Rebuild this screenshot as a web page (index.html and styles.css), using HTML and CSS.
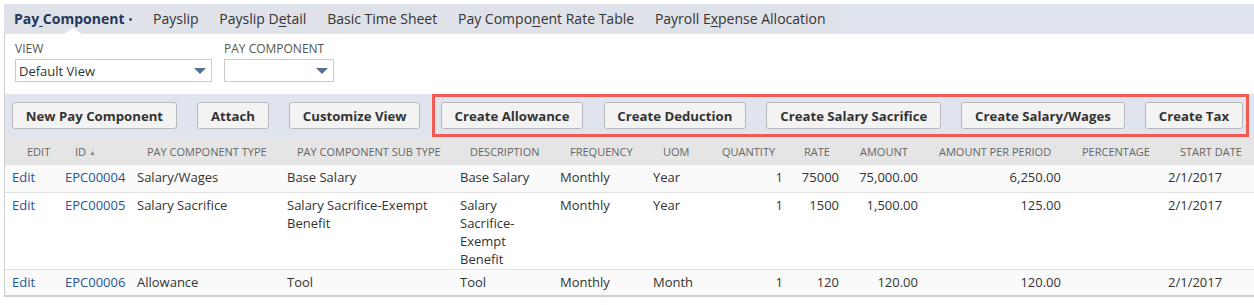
FILE: index.html
```html
<!DOCTYPE html>
<html>
<head>
<meta charset="utf-8">
<link rel="stylesheet" href="styles.css">
</head>
<body>
<div class="page">
  <div class="tabbar">
    <div class="tabgroup">
      <div class="tab active">Pay<u> </u>Component <span class="dot">•</span></div>
      <div class="tab">Payslip</div>
      <div class="tab">Payslip D<u>e</u>tail</div>
      <div class="tab">Basic Time Sheet</div>
      <div class="tab">Pay Compo<u>n</u>ent Rate Table</div>
      <div class="tab">Payroll E<u>x</u>pense Allocation</div>
    </div>
  </div>
  <div class="panel">
    <div class="filters">
      <div class="field">
        <div class="label">VIEW</div>
        <div class="select wide"><span>Default View</span><span class="arrow"></span></div>
      </div>
      <div class="field">
        <div class="label">PAY COMPONENT</div>
        <div class="select narrow"><span></span><span class="arrow"></span></div>
      </div>
    </div>
    <div class="btnbar">
      <button class="btn">New Pay Component</button>
      <button class="btn">Attach</button>
      <button class="btn">Customize View</button>
      <div class="highlight">
        <button class="btn">Create Allowance</button>
        <button class="btn">Create Deduction</button>
        <button class="btn">Create Salary Sacrifice</button>
        <button class="btn">Create Salary/Wages</button>
        <button class="btn">Create Tax</button>
      </div>
    </div>
    <table class="grid">
      <colgroup>
        <col class="c-edit"><col class="c-id"><col class="c-type"><col class="c-sub"><col class="c-desc"><col class="c-freq"><col class="c-uom"><col class="c-qty"><col class="c-rate"><col class="c-amt"><col class="c-app"><col class="c-pct"><col class="c-start">
      </colgroup>
      <thead>
        <tr>
          <th class="first">EDIT</th>
          <th>ID <span class="sort">▲</span></th>
          <th>PAY COMPONENT TYPE</th>
          <th>PAY COMPONENT SUB TYPE</th>
          <th>DESCRIPTION</th>
          <th>FREQUENCY</th>
          <th>UOM</th>
          <th>QUANTITY</th>
          <th>RATE</th>
          <th>AMOUNT</th>
          <th>AMOUNT PER PERIOD</th>
          <th>PERCENTAGE</th>
          <th class="startcol">START DATE</th>
        </tr>
      </thead>
      <tbody>
        <tr class="odd">
          <td class="first"><a>Edit</a></td>
          <td><a>EPC00004</a></td>
          <td>Salary/Wages</td>
          <td>Base Salary</td>
          <td>Base Salary</td>
          <td>Monthly</td>
          <td>Year</td>
          <td class="num">1</td>
          <td class="num">75000</td>
          <td class="num">75,000.00</td>
          <td class="num">6,250.00</td>
          <td></td>
          <td>2/1/2017</td>
        </tr>
        <tr class="even">
          <td class="first"><a>Edit</a></td>
          <td><a>EPC00005</a></td>
          <td>Salary Sacrifice</td>
          <td>Salary Sacrifice-Exempt Benefit</td>
          <td>Salary Sacrifice-Exempt Benefit</td>
          <td>Monthly</td>
          <td>Year</td>
          <td class="num">1</td>
          <td class="num">1500</td>
          <td class="num">1,500.00</td>
          <td class="num">125.00</td>
          <td></td>
          <td>2/1/2017</td>
        </tr>
        <tr class="odd last">
          <td class="first"><a>Edit</a></td>
          <td><a>EPC00006</a></td>
          <td>Allowance</td>
          <td>Tool</td>
          <td>Tool</td>
          <td>Monthly</td>
          <td>Month</td>
          <td class="num">1</td>
          <td class="num">120</td>
          <td class="num">120.00</td>
          <td class="num">120.00</td>
          <td></td>
          <td>2/1/2017</td>
        </tr>
      </tbody>
    </table>
  </div>
</div>
</body>
</html>
```

FILE: styles.css
```css
* { box-sizing: border-box; }
html, body { margin: 0; padding: 0; background: #ffffff; }
body { font-family: "Open Sans", "Liberation Sans", sans-serif; color: #333333; }

.page { margin: 4px 0 0 4px; }

.tabbar {
  height: 30px;
  background: #dfe4ee;
  display: flex;
}
.tabgroup {
  display: flex;
  background: #e0e2e9;
  padding-right: 4px;
}
.tab {
  position: relative;
  padding: 0 10px;
  font-size: 14px;
  line-height: 30px;
  color: #333333;
  white-space: nowrap;
}
.tab + .tab { padding: 0 10.4px; }
.tab u { text-decoration: underline; text-underline-offset: 2px; }
.tab.active { font-weight: bold; color: #24375a; }
.tab.active .dot { font-weight: normal; font-size: 12px; }
.tab.active::after {
  content: "";
  position: absolute;
  left: 50%;
  bottom: 0;
  margin-left: -9px;
  border-left: 9px solid transparent;
  border-right: 9px solid transparent;
  border-bottom: 6px solid #ffffff;
}

.panel { border-left: 1px solid #cccccc; }

.filters {
  display: flex;
  gap: 12px;
  padding: 7px 0 12px 10px;
}
.label {
  font-size: 12px;
  line-height: 16px;
  color: #555555;
  margin-bottom: 2px;
}
.select {
  height: 23px;
  border: 1px solid #cccccc;
  display: flex;
  align-items: center;
  justify-content: space-between;
  padding: 0 5px 0 3px;
  font-size: 13px;
  color: #333333;
}
.select.wide { width: 197px; }
.select.narrow { width: 110px; }
.arrow {
  width: 0;
  height: 0;
  border-left: 6px solid transparent;
  border-right: 6px solid transparent;
  border-top: 6px solid #55708f;
}

.btnbar {
  display: flex;
  align-items: center;
  gap: 20.3px;
  height: 43px;
  padding-left: 7px;
  background: #dfe4ee;
}
.highlight {
  position: relative;
  display: flex;
  gap: 20.3px;
}
.highlight::after {
  content: "";
  position: absolute;
  left: -9px;
  right: -6px;
  top: -8px;
  bottom: -8px;
  border: 3px solid #f25a52;
  pointer-events: none;
}
.btn {
  height: 27px;
  padding: 0 12.8px;
  border: 1px solid #b9b9b9;
  border-radius: 3px;
  background: #f3f3f3;
  font-family: "Open Sans", "Liberation Sans", sans-serif;
  font-size: 13.2px;
  font-weight: bold;
  color: #333333;
  white-space: nowrap;
}

.grid {
  width: 1249px;
  table-layout: fixed;
  border-collapse: collapse;
}
.c-edit { width: 55px; }
.c-id { width: 72px; }
.c-type { width: 150px; }
.c-sub { width: 173px; }
.c-desc { width: 100px; }
.c-freq { width: 93px; }
.c-uom { width: 59px; }
.c-qty { width: 82px; }
.c-rate { width: 56px; }
.c-amt { width: 79px; }
.c-app { width: 143px; }
.c-pct { width: 96px; }
.c-start { width: 91px; }

.grid th {
  height: 28px;
  padding: 0 0 0 15px;
  background: #e5e5e5;
  font-size: 11px;
  font-weight: normal;
  color: #666666;
  text-align: left;
  white-space: nowrap;
  overflow: hidden;
}
.grid th.first { padding-left: 22px; }
.grid th.startcol { padding-left: 17px; }
.grid th .sort { font-size: 7px; vertical-align: 1px; color: #888888; }

.grid td {
  height: 27px;
  padding: 3px 6px 1px 5px;
  font-size: 13px;
  line-height: 18px;
  vertical-align: top;
  border-bottom: 1px solid #e2e2e2;
  color: #333333;
}
.grid td.first { padding-left: 7px; }
.grid td.num { text-align: right; }
.grid tr.odd td { background: #fafafa; }
.grid tr.even td { background: #ffffff; }
.grid tr.last td { border-bottom: 2px solid #cfcfcf; }
.grid a { color: #255595; text-decoration: none; }
```
